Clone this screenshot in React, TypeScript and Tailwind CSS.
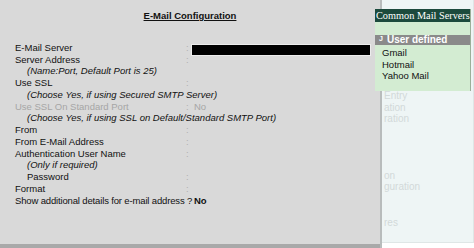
import React from "react";

type Row = {
  label: string;
  indent?: boolean;
  italic?: boolean;
  colon?: boolean;
  value?: React.ReactNode;
  dim?: boolean;
};

const rows: Row[] = [
  { label: "E-Mail Server", colon: true, value: "bar" },
  { label: "Server Address", colon: true },
  { label: "(Name:Port, Default Port is 25)", indent: true, italic: true },
  { label: "Use SSL", colon: true },
  { label: "(Choose Yes, if using Secured SMTP Server)", indent: true, italic: true },
  { label: "Use SSL On Standard Port", colon: true, value: "No", dim: true },
  { label: "(Choose Yes, if using SSL on Default/Standard SMTP Port)", indent: true, italic: true },
  { label: "From", colon: true },
  { label: "From E-Mail Address", colon: true },
  { label: "Authentication User Name", colon: true },
  { label: "(Only if required)", indent: true, italic: true },
  { label: "Password", indent: true, colon: true },
  { label: "Format", colon: true },
];

function FieldRow({ row }: { row: Row }) {
  return (
    <div className={`flex h-[11.75px] items-start whitespace-nowrap ${row.dim ? "text-[#a6a6a6]" : "text-[#111]"}`}>
      <div className={`w-[171px] shrink-0 overflow-visible ${row.indent ? "pl-[12px]" : ""} ${row.italic ? "italic" : ""}`}>
        {row.label}
      </div>
      <div className="w-[5px] shrink-0 text-[#b0b0b0]">{row.colon ? ":" : ""}</div>
      {row.value === "bar" ? (
        <div className="mt-[2px] h-[12px] w-[180px] border border-[#ececec] bg-black" />
      ) : (
        <div className="pl-[3px]">{row.value}</div>
      )}
    </div>
  );
}

export default function App() {
  return (
    <div className="flex h-[248px] w-[474px] overflow-hidden bg-white font-['Liberation_Sans',Arial,sans-serif] text-[9.5px] leading-[11.75px]">
      {/* main form */}
      <div className="flex w-[380px] shrink-0 flex-col">
        <div className="flex-1 bg-[#d9d9d9] pl-[15px] pt-[10px]">
          <div className="pr-[15px] text-center font-bold text-[#111] underline underline-offset-[1px]">
            E-Mail Configuration
          </div>
          <div className="mt-[20px]">
            {rows.map((r) => (
              <FieldRow key={r.label} row={r} />
            ))}
            <div className="flex h-[11.75px] whitespace-nowrap text-[#111]">
              <div className="w-[179px] shrink-0 tracking-[-0.15px]">Show additional details for e-mail address ?</div>
              <div className="font-bold">No</div>
            </div>
          </div>
        </div>
        <div className="h-[4px] bg-[#a9a9a9]" />
      </div>

      {/* divider */}
      <div className="w-[2px] shrink-0 bg-[#b8bcbc]" />

      {/* right side panel */}
      <div className="relative flex w-[92px] shrink-0 flex-col">
        <div className="flex flex-1 border-r border-b border-[#dfe6e6] bg-[#eef5f5]">
          <div className="flex flex-col pt-[90px] pl-[2px] text-[10px] leading-[11.5px] text-[#d2d9d9]">
            <span>Entry</span>
            <span>ation</span>
            <span>ration</span>
            <span className="mt-[45px]">on</span>
            <span>guration</span>
            <span className="mt-[24px]">res</span>
          </div>
        </div>
        <div className="h-[5px] bg-white" />

        {/* Common Mail Servers popup */}
        <div className="absolute left-[-7px] top-[9px] w-[96px] border-r border-[#9ab09a]">
          <div className="h-[13px] bg-[#1c4a3d] pl-[1px] font-['Liberation_Serif','Times_New_Roman',serif] text-[10.3px] leading-[13px] whitespace-nowrap text-white">
            Common Mail Servers
          </div>
          <div className="h-[69px] bg-[#d3ecd2] pt-[13px]">
            <div className="flex h-[10px] items-center bg-[#8a8a8a] pl-[4px] text-[10px] font-bold leading-[10px] text-white">
              <span className="mr-[4px] text-[7px] leading-[7px] -translate-y-[2px]">J</span>
              User defined
            </div>
            <div className="pl-[7px] pt-[2px] text-[#111] leading-[11.5px]">
              <div>Gmail</div>
              <div>Hotmail</div>
              <div>Yahoo Mail</div>
            </div>
          </div>
        </div>
      </div>
    </div>
  );
}
